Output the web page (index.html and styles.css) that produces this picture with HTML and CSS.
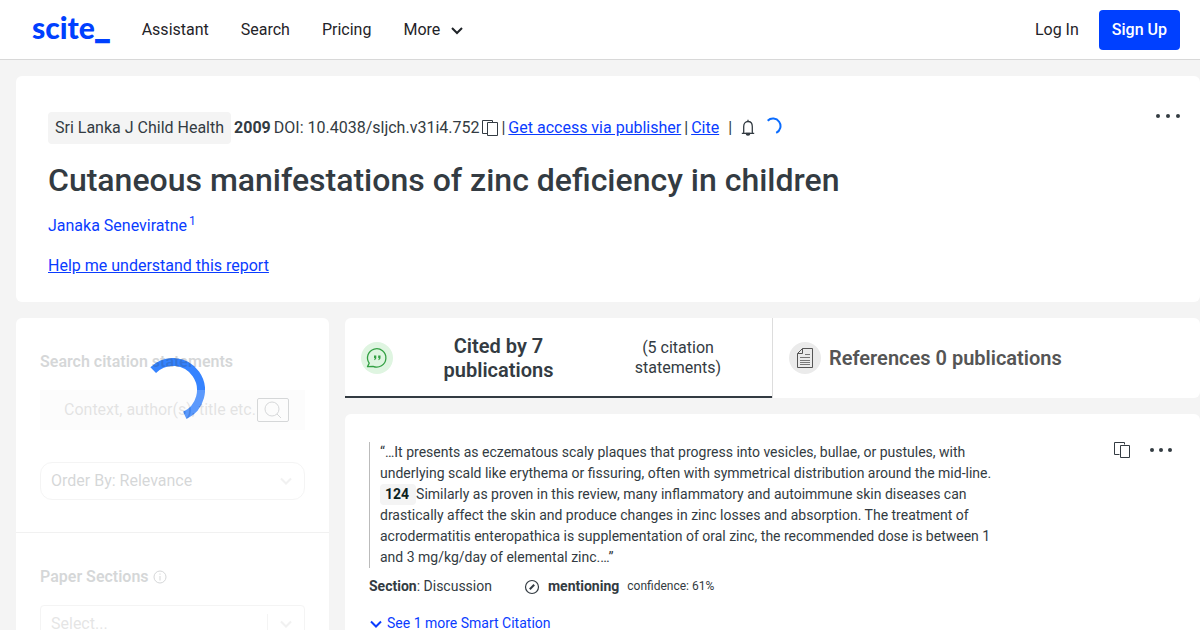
FILE: index.html
```html
<!doctype html>
<html lang="en">
<head>
    <meta charset="UTF-8">
    <meta name="viewport" content="width=device-width, initial-scale=1.0">
    <title>Cutaneous manifestations of zinc deficiency in children - scite</title>

    <link rel="stylesheet" href="styles.css">
</head>
<body>
    <header class="navbar">
        <a class="logo" href="#">scite<span class="cursor">_</span></a>
        <nav class="nav-links">
            <a href="#">Assistant</a>
            <a href="#">Search</a>
            <a href="#">Pricing</a>
            <button type="button" class="more">
                More
                <svg width="14" height="14" viewBox="0 0 14 14" fill="none" stroke="currentColor" stroke-width="2"><path d="M2 5l5 5 5-5"/></svg>
            </button>
        </nav>
        <a class="login" href="#">Log In</a>
        <a class="signup" href="#">Sign Up</a>
    </header>

    <main class="page">
        <section class="paper">
            <div class="paper-info">
                <div class="meta">
                    <span class="journal">Sri Lanka J Child Health</span>
                    <strong>2009</strong>
                    <span>DOI: 10.4038/sljch.v31i4.752</span>
                    <button type="button" class="icon-button" aria-label="Copy DOI">
                        <svg width="16" height="16" viewBox="0 0 16 16" fill="none" stroke="currentColor"><path d="M5.500 13.500h-5v-13h10v2M5.500 2.500h10v13h-10z"/></svg>
                    </button>
                    <span>|</span>
                    <a href="#">Get access via publisher</a>
                    <span>|</span>
                    <a href="#">Cite</a>
                    <span class="last-bar">|</span>
                    <button type="button" class="icon-button" aria-label="Notify me">
                        <svg width="14" height="18" viewBox="0 0 14 18" fill="none" stroke="currentColor" stroke-width="1.300"><path d="M.8 14.300h12.400M2.700 14V7.500C2.700 4.500 4.500 2.500 7 2.500s4.300 2 4.300 5V14M7 2.500V.8"/><path d="M5.300 14.500a1.700 1.700 0 0 0 3.400 0z" fill="currentColor"/></svg>
                    </button>
                    <svg class="small-spinner" width="18" height="18" viewBox="0 0 18 18" fill="none" stroke="#0a6cff" stroke-width="2"><path d="M3.700 3.700A7.500 7.500 0 1 1 12.200 15.800"/></svg>
                </div>
                <h1>Cutaneous manifestations of zinc deficiency in children</h1>
                <p class="authors"><a href="#">Janaka Seneviratne<sup>1</sup></a></p>
                <p class="understand"><a href="#">Help me understand this report</a></p>
            </div>
            <button type="button" class="icon-button" aria-label="Paper options">
                <svg width="24" height="8" viewBox="0 0 24 8" fill="currentColor"><circle cx="2" cy="4" r="2"/><circle cx="12" cy="4" r="2"/><circle cx="22" cy="4" r="2"/></svg>
            </button>
        </section>

        <div class="columns">
            <aside class="filters">
                <svg class="spinner" width="64" height="64" viewBox="0 0 64 64" fill="none" stroke="#3583ff" stroke-width="8"><path d="M12.200 12.200A28 28 0 1 1 43.800 57.400"/></svg>

                <form class="filter-group">
                    <label class="filter-title" for="search">Search citation statements</label>
                    <div class="search-box">
                        <input type="text" id="search" placeholder="Context, author(s), title etc.">
                        <button type="submit" aria-label="Search">
                            <svg width="18" height="18" viewBox="0 0 18 18" fill="none" stroke="currentColor"><circle cx="8" cy="8" r="7"/><path d="M13 13l4 4"/></svg>
                        </button>
                    </div>
                    <div class="select-box order">
                        <select aria-label="Order by">
                            <option>Order By: Relevance</option>
                        </select>
                        <svg width="14" height="14" viewBox="0 0 14 14" fill="none" stroke="currentColor" stroke-width="2"><path d="M2 4.500l5 5 5-5"/></svg>
                    </div>
                </form>

                <form class="filter-group">
                    <label class="filter-title" for="sections">
                        Paper Sections
                        <svg width="14" height="14" viewBox="0 0 14 14" fill="none" stroke="currentColor"><circle cx="7" cy="7" r="6"/><path d="M7 6v4.500M7 3.500v1.200"/></svg>
                    </label>
                    <div class="select-box sections">
                        <select id="sections">
                            <option>Select...</option>
                        </select>
                        <span class="separator"></span>
                        <svg width="14" height="14" viewBox="0 0 14 14" fill="none" stroke="currentColor" stroke-width="2"><path d="M2 4.500l5 5 5-5"/></svg>
                    </div>
                </form>
            </aside>

            <div class="results">
                <div class="tabs" role="tablist">
                    <button type="button" class="tab active" role="tab" aria-selected="true">
                        <svg width="32" height="32" viewBox="0 0 32 32" fill="none">
                            <circle cx="16" cy="16" r="16" fill="#dff5e1"/>
                            <path d="M6.500 24.600l1.700-3.400A9.200 9.200 0 1 1 12 24.300z" stroke="#33a043" stroke-width="1.300" stroke-linejoin="round"/>
                            <path d="M13 13.500h2.300v2.300c0 1.300-.8 2.100-2 2.500l-.2-.8c.6-.3.900-.7.900-1.300h-1zM17.200 13.500h2.300v2.300c0 1.300-.8 2.100-2 2.500l-.2-.8c.6-.3.900-.7.900-1.300h-1z" fill="#33a043"/>
                        </svg>
                        <span class="tab-title">Cited by 7 publications</span>
                        <span class="tab-note">(5 citation statements)</span>
                    </button>
                    <button type="button" class="tab" role="tab" aria-selected="false">
                        <svg width="32" height="32" viewBox="0 0 32 32" fill="none">
                            <circle cx="16" cy="16" r="16" fill="#ebebeb"/>
                            <path d="M13.500 6.500h10v19h-15v-14zM13.500 6.500v5h-5" stroke="#555"/>
                            <path d="M16 12.500h5M11 15.500h10M11 18.500h10M11 20.500h10M11 22.500h10" stroke="#777"/>
                        </svg>
                        <span class="tab-title">References 0 publications</span>
                    </button>
                </div>

                <article class="citation">
                    <div class="citation-top">
                        <blockquote>“…It presents as eczematous scaly plaques that progress into vesicles, bullae, or pustules, with underlying scald like erythema or fissuring, often with symmetrical distribution around the mid-line. <strong class="ref">124</strong>Similarly as proven in this review, many inflammatory and autoimmune skin diseases can drastically affect the skin and produce changes in zinc losses and absorption. The treatment of acrodermatitis enteropathica is supplementation of oral zinc, the recommended dose is between 1 and 3 mg/kg/day of elemental zinc.…”</blockquote>
                        <div class="citation-actions">
                            <button type="button" class="icon-button" aria-label="Copy citation">
                                <svg width="16" height="16" viewBox="0 0 16 16" fill="none" stroke="currentColor"><path d="M5.500 12.500h-5v-12h10v2M6.500 3.500h9v12h-9z"/></svg>
                            </button>
                            <button type="button" class="icon-button" aria-label="Citation options">
                                <svg width="22" height="8" viewBox="0 0 22 8" fill="currentColor"><circle cx="2" cy="4" r="2"/><circle cx="11" cy="4" r="2"/><circle cx="20" cy="4" r="2"/></svg>
                            </button>
                        </div>
                    </div>
                    <div class="citation-info">
                        <span><strong>Section</strong>: Discussion</span>
                        <span class="type">
                            <svg width="16" height="16" viewBox="0 0 16 16" fill="none" stroke="currentColor"><circle cx="8" cy="8" r="6.500" stroke-width="1.200"/><path d="M5.800 10.200l4.400-4.400" stroke-width="2"/></svg>
                            <strong>mentioning</strong>
                            <small>confidence: 61%</small>
                        </span>
                    </div>
                    <button type="button" class="see-more">
                        <svg width="14" height="14" viewBox="0 0 14 14" fill="none" stroke="currentColor" stroke-width="2"><path d="M2 4.500l5 5 5-5"/></svg>
                        See 1 more Smart Citation
                    </button>
                </article>
            </div>
        </div>
    </main>
</body>
</html>
```
FILE: styles.css
```css
* {
    box-sizing: border-box;
}

body {
    margin: 0;
    background-color: #f4f4f4;
    color: #333b42;
    font-family: Roboto, "Liberation Sans", sans-serif;
    font-size: 16px;
    line-height: 24px;
}

a {
    color: #0a3cff;
}

button,
input,
select {
    font: inherit;
    color: inherit;
}

button {
    background: none;
    border: none;
    padding: 0;
    cursor: pointer;
}

svg {
    display: block;
    flex-shrink: 0;
}

/* Top bar */
.navbar {
    display: flex;
    align-items: center;
    height: 60px;
    padding: 0 20px 0 32px;
    background-color: #fff;
    border-bottom: 1px solid #d8d8d8;
    color: #1f2328;
}

.navbar a {
    color: inherit;
    text-decoration: none;
}

.navbar .logo {
    margin-right: 32px;
    padding-bottom: 4px;
    color: #0040ff;
    font-family: Lato, sans-serif;
    font-size: 30px;
    font-weight: 900;
}

.cursor {
    font-family: Inter, sans-serif;
}

.nav-links {
    display: flex;
    flex-grow: 1;
    gap: 32px;
}

.more {
    display: flex;
    align-items: center;
    gap: 10px;
}

.navbar .signup {
    margin-left: 20px;
    padding: 8px 13px;
    background-color: #0040ff;
    border-radius: 4px;
    color: #fff;
    font-weight: 500;
}

/* Paper details */
.page {
    padding: 16px 0 0 16px;
}

.paper {
    display: flex;
    justify-content: space-between;
    align-items: flex-start;
    padding: 36px 20px 24px 32px;
    background-color: #fff;
    border-radius: 6px;
}

.meta {
    display: flex;
    align-items: center;
    gap: 3px;
}

.journal {
    padding: 4px 7px;
    background-color: #f4f4f4;
    border-radius: 4px;
}

.icon-button {
    display: flex;
    align-items: center;
}

.last-bar {
    margin: 0 6px;
}

.small-spinner {
    margin: 0 0 4px 6px;
}

h1 {
    margin: 16px 0 14px;
    font-size: 32px;
    font-weight: 500;
    line-height: 40px;
}

.authors,
.understand {
    margin: 0 0 16px;
}

.authors a {
    text-decoration: none;
}

.authors sup {
    margin-left: 2px;
    font-size: 12px;
    line-height: 0;
}

.understand {
    margin-bottom: 0;
}

/* Filters */
.columns {
    display: flex;
    align-items: flex-start;
    gap: 16px;
    margin-top: 16px;
}

.filters {
    position: relative;
    flex: 0 0 313px;
    min-width: 0;
    background-color: #fff;
    border-radius: 6px;
}

.spinner {
    position: absolute;
    top: 40px;
    left: 125px;
}

.filter-group {
    position: relative;
    padding: 32px 24px;
    opacity: 0.2;
}

.filter-group + .filter-group {
    border-top: 1px solid #bbb;
}

.filter-title {
    display: flex;
    align-items: center;
    gap: 4px;
    font-weight: 600;
}

.search-box {
    display: flex;
    align-items: center;
    height: 40px;
    margin: 16px 0 32px;
    padding: 0 16px 0 24px;
    background-color: #f4f4f4;
}

.search-box input {
    flex: 1;
    min-width: 0;
    padding: 0;
    background: none;
    border: none;
}

.search-box input::placeholder {
    color: #777;
    opacity: 1;
}

.search-box button {
    padding: 2px 6px;
    border: 1px solid #333b42;
    border-radius: 2px;
}

.select-box {
    display: flex;
    align-items: center;
    height: 38px;
    padding: 0 11px 0 10px;
    border: 1px solid #ccc;
    border-radius: 4px;
}

.select-box select {
    appearance: none;
    flex: 1;
    padding: 0;
    background: none;
    border: none;
}

.select-box svg {
    color: #bbb;
}

.order {
    border-radius: 12px;
}

.sections {
    margin-top: 16px;
}

.sections select {
    color: #808080;
}

.separator {
    width: 1px;
    height: 20px;
    margin-right: 11px;
    background-color: #ccc;
}

/* Citation tabs */
.results {
    flex: 1;
    min-width: 0;
}

.tabs {
    display: flex;
    background-color: #fff;
    border-radius: 6px;
}

.tab {
    display: flex;
    flex: 1;
    align-items: center;
    gap: 8px;
    height: 80px;
    padding: 0 20px 0 16px;
    color: #555;
}

.tab + .tab {
    border-left: 1px solid #ddd;
}

.tab.active {
    box-shadow: inset 0 -2px #333b42;
    color: #333b42;
}

.tab-title {
    font-size: 20px;
    font-weight: 600;
}

.active .tab-title {
    flex: 1;
    padding: 0 40px;
}

.tab-note {
    width: 148px;
    padding: 0 28px;
    line-height: 20px;
}

/* Citation card */
.citation {
    margin-top: 16px;
    padding: 28px 28px 28px 24px;
    background-color: #fff;
    border-radius: 6px;
    font-size: 14px;
    line-height: 21px;
}

.citation-top {
    display: flex;
    justify-content: space-between;
    align-items: flex-start;
}

blockquote {
    max-width: 636px;
    margin: 0;
    padding-left: 10px;
    border-left: 1px solid #bbb;
}

.ref {
    display: inline-block;
    padding: 0 7px 0 5px;
    background-color: #f4f4f4;
    border-radius: 4px;
    color: #0d1f1f;
}

.citation-actions {
    display: flex;
    align-items: center;
    gap: 20px;
}

.citation-info {
    display: flex;
    align-items: center;
    gap: 32px;
    margin: 8px 0 16px;
}

.type {
    display: flex;
    align-items: center;
    gap: 8px;
}

.type small {
    font-size: 12px;
}

.see-more {
    display: flex;
    align-items: center;
    gap: 4px;
    color: #0a3cff;
}
```
